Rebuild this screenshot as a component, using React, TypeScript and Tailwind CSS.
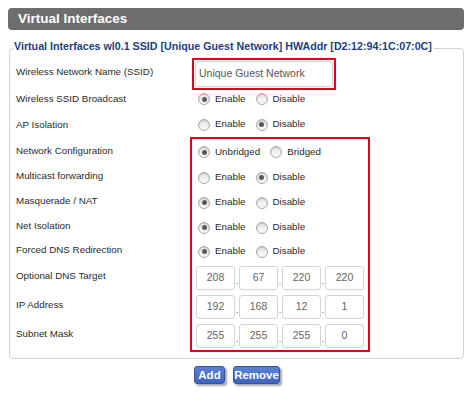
import React from "react";

type Opt = { label: string; checked: boolean };

const FONT = "font-['Liberation_Sans',Arial,sans-serif]";

function Radio({ checked }: { checked: boolean }) {
  return (
    <span className="relative inline-flex h-[12px] w-[12px] shrink-0 items-center justify-center rounded-full border border-[#a9a9a9] bg-gradient-to-b from-[#e4e4e4] to-[#fafafa] shadow-[inset_0_1px_1px_rgba(0,0,0,0.15)]">
      {checked ? <span className="h-[5px] w-[5px] rounded-full bg-[#5a5a5a]" /> : null}
    </span>
  );
}

function RadioPair({ opts }: { opts: Opt[] }) {
  return (
    <div className="flex items-center gap-[10px]">
      {opts.map((o) => (
        <label key={o.label} className="flex items-center gap-[5px] text-[9.8px] text-[#2a2a2a]">
          <Radio checked={o.checked} />
          <span>{o.label}</span>
        </label>
      ))}
    </div>
  );
}

function enable(on: boolean): Opt[] {
  return [
    { label: "Enable", checked: on },
    { label: "Disable", checked: !on },
  ];
}

function Octets({ values }: { values: string[] }) {
  return (
    <div className="flex items-center">
      {values.map((v, i) => (
        <React.Fragment key={i}>
          {i > 0 ? <span className="w-[4px] pt-[8px] text-center text-[9px] leading-none text-[#555]">.</span> : null}
          <div className="flex h-[24px] w-[39px] items-center justify-center rounded-[3px] border border-[#d4d4d4] bg-white text-[10.5px] text-[#666]">
            {v}
          </div>
        </React.Fragment>
      ))}
    </div>
  );
}

const labels: { text: string; h: string }[] = [
  { text: "Wireless Network Name (SSID)", h: "h-[28px]" },
  { text: "Wireless SSID Broadcast", h: "h-[26px]" },
  { text: "AP Isolation", h: "h-[26px]" },
  { text: "Network Configuration", h: "h-[26px]" },
  { text: "Multicast forwarding", h: "h-[25px]" },
  { text: "Masquerade / NAT", h: "h-[25px]" },
  { text: "Net Isolation", h: "h-[25px]" },
  { text: "Forced DNS Redirection", h: "h-[23px]" },
  { text: "Optional DNS Target", h: "h-[29px]" },
  { text: "IP Address", h: "h-[29px]" },
  { text: "Subnet Mask", h: "h-[29px]" },
];

const btn =
  "h-[18px] rounded-[3px] border border-[#34549e] bg-gradient-to-b from-[#5b80d6] to-[#3f64bd] text-[11.5px] font-bold text-white shadow-[2px_2px_2px_rgba(0,0,0,0.35)]";

export default function App() {
  return (
    <div className={`h-[395px] w-[474px] overflow-hidden bg-white pt-2 ${FONT}`}>
      {/* Section header */}
      <div className="ml-2 flex h-[22px] w-[456px] items-center rounded-[4px] bg-[#6d6d6d] pl-[10px] text-[13.5px] font-bold text-white">
        Virtual Interfaces
      </div>

      <fieldset className="ml-[9px] mt-[12px] w-[455px] rounded-[4px] border border-[#d2d2d2] pb-[6px] pl-[4px] pt-[4px]">
        <legend className="pr-[2px] text-[10.7px] font-bold leading-[12px] text-[#1d3f7e]">
          <span className="relative -top-[2px]">
            Virtual Interfaces wl0.1 SSID [Unique Guest Network] HWAddr [D2:12:94:1C:07:0C]
          </span>
        </legend>

        <div className="ml-[2px] flex">
          {/* Labels */}
          <div className="flex w-[174px] flex-col">
            {labels.map((l) => (
              <div key={l.text} className={`flex items-center text-[9.8px] text-[#2a2a2a] ${l.h}`}>
                {l.text}
              </div>
            ))}
          </div>

          {/* Values */}
          <div className="flex flex-col">
            <div className="h-[28px]">
              <div className="ml-[2px] h-[32px] w-[144px] border-2 border-[#e3001b] p-px">
                <div className="flex h-full items-center rounded-[3px] border border-[#d4d4d4] bg-white pl-[3px] text-[10.5px] text-[#555]">
                  Unique Guest Network
                </div>
              </div>
            </div>
            <div className="flex h-[26px] items-center pl-[8px]">
              <RadioPair opts={enable(true)} />
            </div>
            <div className="flex h-[25px] items-center pl-[8px]">
              <RadioPair opts={enable(false)} />
            </div>

            <div className="flex w-[180px] flex-col border-2 border-[#e3001b] pl-[4px] pr-[2px]">
              <div className="flex h-[26px] items-center pl-[2px]">
                <RadioPair
                  opts={[
                    { label: "Unbridged", checked: true },
                    { label: "Bridged", checked: false },
                  ]}
                />
              </div>
              <div className="flex h-[25px] items-center pl-[2px]">
                <RadioPair opts={enable(false)} />
              </div>
              <div className="flex h-[25px] items-center pl-[2px]">
                <RadioPair opts={enable(true)} />
              </div>
              <div className="flex h-[25px] items-center pl-[2px]">
                <RadioPair opts={enable(true)} />
              </div>
              <div className="flex h-[23px] items-center pl-[2px]">
                <RadioPair opts={enable(true)} />
              </div>
              <div className="flex h-[29px] items-center">
                <Octets values={["208", "67", "220", "220"]} />
              </div>
              <div className="flex h-[29px] items-center">
                <Octets values={["192", "168", "12", "1"]} />
              </div>
              <div className="flex h-[29px] items-center">
                <Octets values={["255", "255", "255", "0"]} />
              </div>
            </div>
          </div>
        </div>
      </fieldset>

      <div className="mt-[7px] flex justify-center gap-2">
        <button className={`w-[31px] ${btn}`}>Add</button>
        <button className={`w-[47px] ${btn}`}>Remove</button>
      </div>
    </div>
  );
}
